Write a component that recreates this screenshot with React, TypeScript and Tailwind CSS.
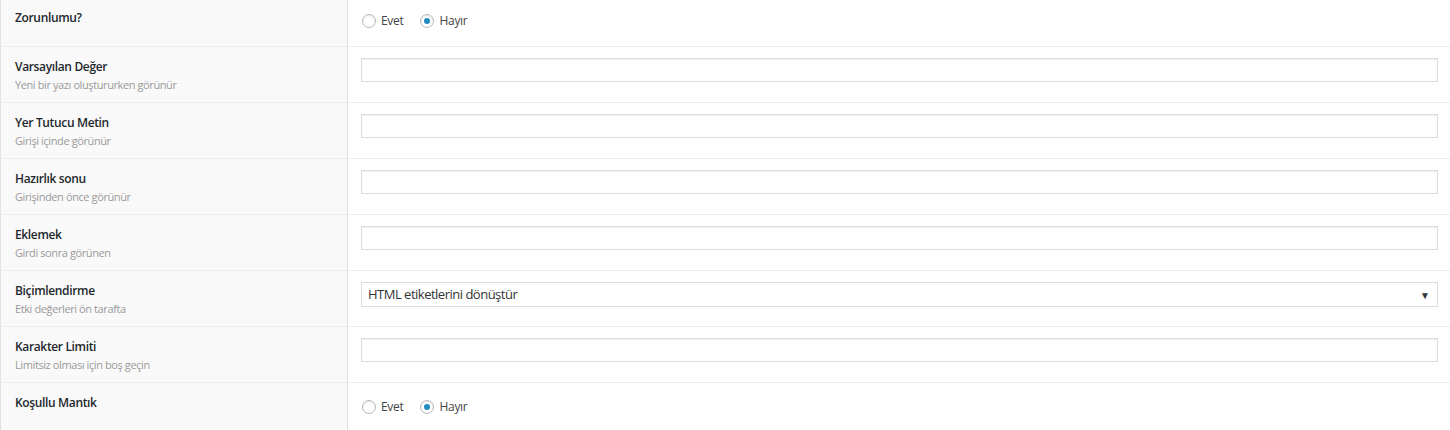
import React from 'react';

type Row =
  | { kind: 'radio'; label: string; desc?: string }
  | { kind: 'text'; label: string; desc?: string }
  | { kind: 'select'; label: string; desc?: string; value: string };

const rows: Row[] = [
  { kind: 'radio', label: 'Zorunlumu?' },
  { kind: 'text', label: 'Varsayılan Değer', desc: 'Yeni bir yazı oluştururken görünür' },
  { kind: 'text', label: 'Yer Tutucu Metin', desc: 'Girişi içinde görünür' },
  { kind: 'text', label: 'Hazırlık sonu', desc: 'Girişinden önce görünür' },
  { kind: 'text', label: 'Eklemek', desc: 'Girdi sonra görünen' },
  { kind: 'select', label: 'Biçimlendirme', desc: 'Etki değerleri ön tarafta', value: 'HTML etiketlerini dönüştür' },
  { kind: 'text', label: 'Karakter Limiti', desc: 'Limitsiz olması için boş geçin' },
  { kind: 'radio', label: 'Koşullu Mantık' },
];

const Radio = ({ checked, label }: { checked?: boolean; label: string }) => (
  <label className="flex items-center gap-[5px]">
    <span className="flex h-[14px] w-[14px] items-center justify-center rounded-full border border-[#b4b9be] bg-white shadow-[inset_0_1px_2px_rgba(0,0,0,0.1)]">
      {checked && <span className="h-[6px] w-[6px] rounded-full bg-[#1e8cbe]" />}
    </span>
    <span className="text-[12px] leading-[16px] tracking-[-0.3px] text-[#444]">{label}</span>
  </label>
);

export default function App() {
  return (
    <div className="w-[1450px] h-[430px] overflow-hidden bg-white font-['Open_Sans',sans-serif] text-[#333]">
      {rows.map((row, i) => {
        const first = i === 0;
        const isRadio = row.kind === 'radio';
        return (
          <div
            key={i}
            className={`flex ${first ? 'h-[46px]' : isRadio ? 'h-[48px] border-t border-[#ededed]' : 'h-[56px] border-t border-[#ededed]'}`}
          >
            <div
              className={`w-[348px] shrink-0 border-l border-r border-[#e1e1e1] bg-[#f9f9f9] pl-[14px] ${
                first ? 'pt-[9px]' : 'pt-[11px]'
              }`}
            >
              <div className="text-[12px] font-semibold leading-[18px] tracking-[-0.35px] text-[#23282d]">
                {row.label}
              </div>
              {row.desc && (
                <div className="pt-[1px] text-[11px] leading-[15px] tracking-[-0.4px] text-[#999]">{row.desc}</div>
              )}
            </div>
            <div
              className={`flex-1 pl-[13px] pr-[12px] ${first ? 'pt-[13px]' : isRadio ? 'pt-[16px]' : 'pt-[11px]'}`}
            >
              {row.kind === 'radio' && (
                <div className="flex items-center gap-[17px] pl-[1px]">
                  <Radio label="Evet" />
                  <Radio checked label="Hayır" />
                </div>
              )}
              {row.kind === 'text' && (
                <input
                  type="text"
                  className="block h-[24px] w-full border border-[#dddddd] bg-white shadow-[inset_0_1px_2px_rgba(0,0,0,0.07)] outline-none"
                />
              )}
              {row.kind === 'select' && (
                <div className="flex h-[25px] w-full items-center justify-between border border-[#dddddd] bg-white pl-[6px] pr-[7px]">
                  <span className="text-[13px] tracking-[-0.5px] text-[#333]">{row.value}</span>
                  <span className="text-[10px] leading-none text-[#32373c]">▼</span>
                </div>
              )}
            </div>
          </div>
        );
      })}
    </div>
  );
}
